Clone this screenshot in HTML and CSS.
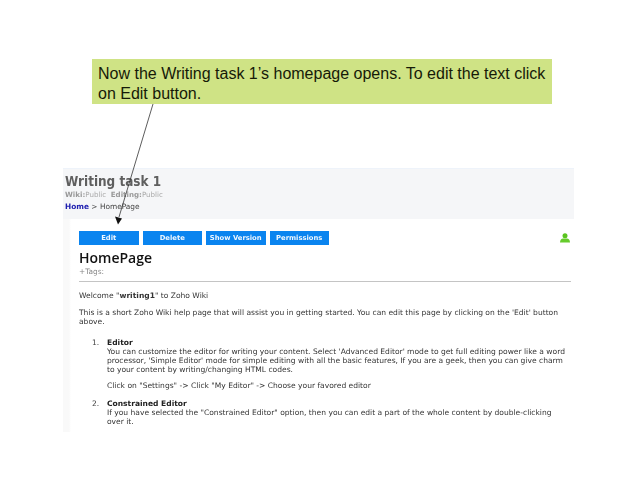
FILE: index.html
```
<!DOCTYPE html>
<html lang="en">
<head>
<meta charset="utf-8">
<title>Writing task 1</title>
<link rel="stylesheet" href="styles.css">
</head>
<body>
<main class="slide">
  <div class="callout">Now the Writing task 1’s homepage opens. To edit the text click<br>on Edit button.</div>
  <section class="shot">
    <header class="wiki-head">
      <h1>Writing task 1</h1>
      <p class="meta"><b>Wiki:</b>Public &nbsp;<b>Editing:</b>Public</p>
      <p class="crumbs"><a>Home</a> &gt; HomePage</p>
    </header>
    <div class="page">
      <div class="toolbar">
        <span class="btn b1">Edit</span>
        <span class="btn b1">Delete</span>
        <span class="btn b1">Show Version</span>
        <span class="btn b1">Permissions</span>
        <svg class="user" width="10" height="10" viewBox="0 0 10 10"><circle cx="5" cy="2.800" r="2.500" fill="#5ac41f"/><path d="M0 9.500C0 7 1.500 5.500 3 5.500H7C8.500 5.500 10 7 10 9.500Z" fill="#66cc2c"/></svg>
      </div>
      <h2>HomePage</h2>
      <p class="tags">+Tags:</p>
      <div class="rule"></div>
      <p class="welcome">Welcome "<b>writing1</b>" to Zoho Wiki</p>
      <p class="intro">This is a short Zoho Wiki help page that will assist you in getting started. You can edit this page by clicking on the 'Edit' button<br>above.</p>
      <ol>
        <li><span class="num">1.</span><div><b>Editor</b><br>You can customize the editor for writing your content. Select 'Advanced Editor' mode to get full editing power like a word<br>processor, 'Simple Editor' mode for simple editing with all the basic features, If you are a geek, then you can give charm<br>to your content by writing/changing HTML codes.
          <p class="sub">Click on "Settings" -&gt; Click "My Editor" -&gt; Choose your favored editor</p></div></li>
        <li><span class="num">2.</span><div><b>Constrained Editor</b><br>If you have selected the "Constrained Editor" option, then you can edit a part of the whole content by double-clicking<br>over it.</div></li>
      </ol>
    </div>
  </section>
  <svg class="arrow" width="60" height="130" viewBox="0 0 60 130"><line x1="44" y1="0" x2="10" y2="113" stroke="#333" stroke-width="0.8"/><path d="M9 120.500L6 112.500L13 114.500Z" fill="#111"/></svg>
</main>
</body>
</html>
```
FILE: styles.css
```
html, body { margin: 0; padding: 0; background: #fff; }
body { width: 638px; height: 478px; overflow: hidden; }
p, h1, h2, ol { margin: 0; padding: 0; }
.slide { position: relative; height: 478px; padding: 59px 64px 0 63px; box-sizing: border-box; }
.callout {
  margin-left: 29px; width: 460px; height: 45px; box-sizing: border-box;
  padding: 5px 0 0 6px; background: #cfe385; color: #161a08;
  font: 16px/20px "Liberation Sans", Arial, sans-serif;
  white-space: nowrap;
}
.shot {
  margin-top: 64px; width: 511px; height: 264px; overflow: hidden;
  font-family: "DejaVu Sans", Verdana, sans-serif;
  font-size: 7.550px; line-height: 9px; color: #333;
  background: linear-gradient(90deg, #f9f9f9 0, #f9f9f9 6px, #fff 8px);
  filter: blur(0.3px);
}
.wiki-head {
  height: 51px; box-sizing: border-box; padding: 4px 0 0 2px;
  background: #f5f6f8; border-top: 1px solid #eef3fa;
}
h1 { font-size: 13.400px; font-stretch: condensed; line-height: 17px; font-weight: bold; color: #5f5f5f; }
.meta { font-size: 7.100px; line-height: 9px; color: #aaa; }
.meta b { color: #999; }
.crumbs { margin-top: 3px; font-size: 7.400px; line-height: 10px; color: #444; }
.crumbs a { color: #2020b0; font-weight: bold; }
.page { padding: 12px 3px 0 16px; }
.toolbar { display: flex; align-items: center; gap: 4px; height: 14px; }
.btn {
  height: 14px; color: #eef7ff; background: #0a84ef;
  font-size: 6.800px; line-height: 14px; font-weight: bold; text-align: center;
}
.b1 { width: 59.500px; }
.user { margin-left: auto; margin-right: 1px; }
h2 { margin-top: 3px; font-family: "Open Sans", sans-serif; font-size: 14px; line-height: 19px; font-weight: 600; color: #111; }
.tags { color: #888; font-size: 7.400px; line-height: 9px; }
.rule { margin-top: 5px; height: 1px; background: #c4c4c4; }
.welcome { margin-top: 9px; }
.intro { margin-top: 8px; white-space: nowrap; }
ol { margin-top: 12px; padding-left: 13px; white-space: nowrap; list-style: none; }
li { display: grid; grid-template-columns: 15px 1fr; margin-bottom: 9px; }
.num { color: #444; }
li b { color: #222; }
.sub { margin-top: 7px; }
.arrow { position: absolute; left: 109px; top: 104px; }
```
